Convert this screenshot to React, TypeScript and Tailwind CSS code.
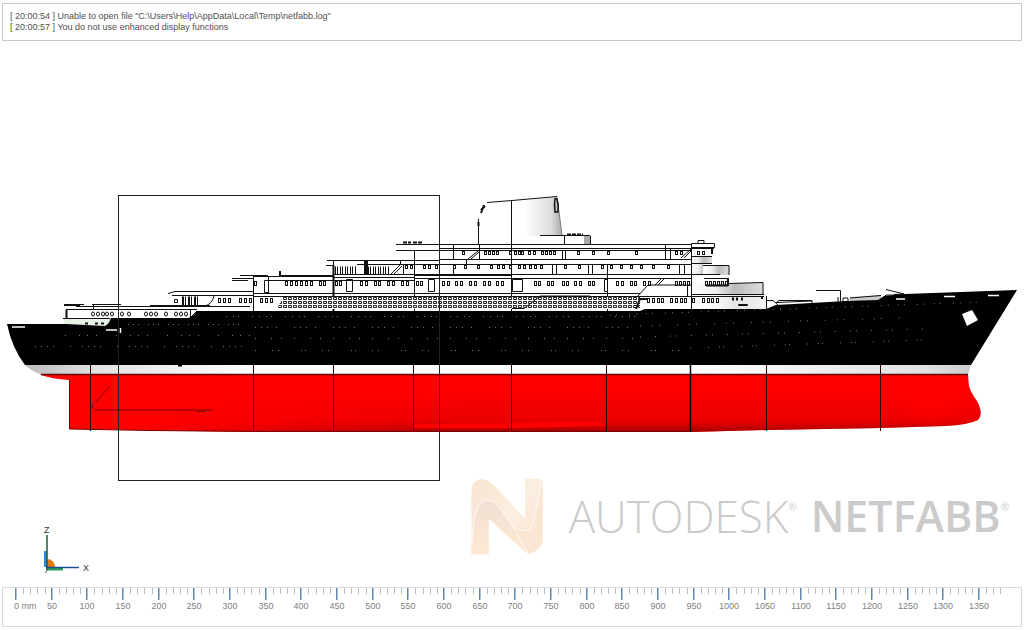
const LOG = [
  { time: '20:00:54', message: 'Unable to open file "C:\\Users\\Help\\AppData\\Local\\Temp\\netfabb.log"' },
  { time: '20:00:57', message: 'You do not use enhanced display functions' },
]

// x positions of the windows on each deck
const DECKS = [
  { y: 251, w: 2, h: 3, xs: [462, 484, 488, 492, 496, 509, 514, 518, 521, 528, 533, 541, 545, 549, 553, 577, 592, 607, 635, 675, 680, 697, 702] },
  { y: 265, w: 2, h: 3, xs: [405, 410, 423, 428, 435, 453, 464, 477, 490, 497, 502, 509, 518, 523, 529, 534, 540, 564, 578, 601, 610, 620, 630, 640, 652, 667] },
  { y: 281, w: 2, h: 4, xs: [254, 285, 290, 295, 300, 305, 310, 319, 323, 335, 339, 360, 365, 374, 378, 387, 392, 401, 406, 416, 420, 442, 447, 455, 460, 469, 474, 483, 488, 496, 501, 534, 538, 547, 551, 562, 566, 574, 579, 588, 592, 616, 621, 630, 634, 643, 648, 675, 679, 683, 687, 705, 709, 713, 717, 721, 725] },
  { y: 298, w: 2, h: 4, xs: [218, 223, 228, 239, 244, 249, 260, 265, 270, 647, 652, 657, 661, 670, 675, 680, 684, 692, 702, 707, 711, 716] },
]

const AFT_PORTS = [93, 98, 103, 107, 112, 122, 129, 146, 151, 156, 166, 176, 181, 186]
const FRAMES = [91, 254, 334, 414, 512, 607, 767, 881]

const HULL_DOTS = [
  { d: 'M128 324.5H245', dash: '1 4 1 4 1 9' },
  { d: 'M65 335.5H250', dash: '1 13 1 7 1 8 1 19' },
  { d: 'M35 346.5H250', dash: '1 5 1 5 1 5 1 16 1 11' },
  { d: 'M226 316.5H640', dash: '1 6 1 4 1 13 1 6' },
  { d: 'M255 327.5H640', dash: '1 5 1 5 1 8 1 17' },
  { d: 'M255 338.5H640', dash: '1 15 1 9 1 12' },
  { d: 'M255 350.5H690', dash: '1 16 1 5 1 22 1 3' },
  { d: 'M610 315L985 302', dash: '1 5 1 12 1 6 1 9' },
  { d: 'M640 326L900 318', dash: '1 11 1 6 1 17' },
  { d: 'M640 337L925 329', dash: '1 14 1 14 1 5' },
  { d: 'M690 348L925 340', dash: '1 17 1 10 1 3' },
]

const LABELS = Array.from({ length: 28 }, (_, i) => i * 50)
const TICKS = Array.from({ length: 139 }, (_, i) => i)
const rulerX = (mm: number) => Math.round(16 + mm * 0.7133)

function LogPanel() {
  return (
    <ul className="border border-[#c8c8c8] px-[7px] py-[7px] text-[9px] leading-[11px] text-[#505050]">
      {LOG.map(entry => (
        <li key={entry.time}>[ {entry.time} ] {entry.message}</li>
      ))}
    </ul>
  )
}

function Superstructure() {
  return (
    <g fill="none" stroke="#111">
      {/* Shaded deck houses */}
      <g stroke="none">
        <path d="M691 256H712V264H703V275H691Z" fill="url(#house)" />
        <path d="M703 266H729V275H703Z" fill="url(#house)" />
        <path d="M691 283H763V294H691Z" fill="url(#house)" />
        <path d="M691 294H766V309H691Z" fill="url(#house)" opacity="0.4" />
        <path d="M64 319H111L106 326H64Z" fill="#e6f3e6" />
        <path d="M487 202L557 197L562 236H487Z" fill="url(#funnel)" />
        <path d="M584 236H590V244H584Z" fill="#aaa" />
      </g>

      {/* Funnel */}
      <path d="M487 202.5L512 200.5L557 196.5M478.5 219V244M540 235.5H590M511.5 201V311M564.5 236V244M590.5 236V244" />
      <path d="M557 197L562 235" stroke="#777" />
      <path d="M555 199h2q2 6 1 13h-3q-1-7 0-13Z" strokeWidth="1.5" />
      <path d="M484 205l-3 8M485 206l-4 4M478.5 222v4" strokeWidth="2" />
      <path d="M567 234.5H583" strokeWidth="2" strokeDasharray="4 1" />

      {/* Deck lines */}
      <path d="M396 244.5H691M440 248.5H714M396 250.5H691M440 259.5H691M327 260.5H440M326 265.5H333M357 264.5H691M333 274.5H720M415 278.5H691" />
      <path d="M333 277.5H415M268 280.5H415M253 293.5H640M253 296.5H690M638 296.5H764" />
      <path d="M232 278.5H254M232 280.5H248M240 275.5H268M253 276.5H333M168 293.5L175 291.5H253M172 295.5H253" />
      <path d="M64 304.5H84M92 304.5H121M76 306.5H250M66 309.5H197M63 318.5H110M150 305.5H210" />
      <path d="M280 276H333M64 305H80M415 275H512" strokeWidth="2" />
      <path d="M413 242.5h10M403 242.5h8" strokeWidth="2" strokeDasharray="4 1" />

      {/* Bulkheads */}
      <path d="M253.5 276V311M268.5 276V293M333.5 260V311M414.5 250V311M453.5 245V260M453.5 265V275M479.5 244V260M562.5 250V260M565.5 250V260M552.5 265V275M556.5 265V275M588.5 265V275M592.5 265V275M607.5 265V311" />
      <path d="M665.5 244V259M670.5 249V259M679.5 264V275M684.5 264V275M691.5 244V309M687.5 285V296M466.5 260V265M400.5 260V265M403.5 265V275M190.5 310V318M93.5 304V310" />
      <path d="M264.5 280.5h4v12h-4zM346.5 279.5h6v12h-6zM428.5 279.5h6v12h-6zM512.5 279.5h10v12h-10zM604.5 279.5h3v12h-3z" />
      <path d="M333.5 265V311M66.5 310V318" strokeWidth="2" />
      <path d="M366 260V275" strokeWidth="4" />
      <path d="M280 271V276" strokeWidth="2" />
      <path d="M390 275L400 265M393 275L402 266M468 259L478 251M471 259L479 252M681 258L691 249M684 258L691 251M655 285L662 278M658 285L665 278M638 296L648 285H691M214 296Q212 304 205 306M197 311L190 318" />
      <path d="M335 270.5H356M368 270.5H390" strokeWidth="8" strokeDasharray="1 1 1 2" />
      <path d="M182 301H200" strokeWidth="9" strokeDasharray="2 1 1 2" />
      <path d="M174.5 299.5h3v3h-3z" />

      {/* Bridge */}
      <path d="M691.5 243.5H714.5V247.5H691.5ZM698 243V240.5H704V243M691 256.5H712M703 265.5H729V275M691 263.5H712M728 283.5L763 282.5V294M766.5 296V309M691 294.5H764M704 278.5H729" />
      <path d="M712 248v6M728 278v8M706 285.5H728M762 296v3" strokeWidth="2" />
      <path d="M732 299H745" strokeWidth="3" strokeDasharray="2 2 2 3" />
      <path d="M738.5 304.5h9v1h-9z" />

      {/* Promenade glazing */}
      <path d="M283 297H640V309H277Z" fill="url(#glazing)" stroke="none" />
      <path d="M512 308.5H524L540 296H590" />
      <path d="M636 309L640 299H647" strokeWidth="2" />

      {DECKS.map(deck =>
        deck.xs.map(x => (
          <rect key={`${deck.y}-${x}`} x={x + 0.5} y={deck.y + 0.5} width={deck.w} height={deck.h} />
        ))
      )}
      {AFT_PORTS.map(x => (
        <ellipse key={x} cx={x} cy="314" rx="1.5" ry="2" />
      ))}
      <path d="M85 323.5h3M95 323.5h3M101 323.5h3" strokeWidth="2" />

      {/* Foredeck gear */}
      <path d="M850 297L881 295V301H850Z" fill="#ccc" stroke="none" />
      <path d="M766 300.5H773L778 305M776 303L779 300.5H812V303M776 302.5L812 301M816 290.5H840.5V302M838 297V302M843 302V298H848V302M850 298L881 295.5M881 300L886 295H905M886 289.5L904 294L894 294.5" />
    </g>
  )
}

function ShipModel() {
  return (
    <svg viewBox="2 41 1020 437" className="block h-auto w-full overflow-visible" role="img" aria-label="Ship hull, side view">
      <defs>
        <linearGradient id="funnel">
          <stop offset="0.5" stopColor="#fff" />
          <stop offset="0.85" stopColor="#ddd" />
          <stop offset="1" stopColor="#aaa" />
        </linearGradient>
        <linearGradient id="house">
          <stop offset="0" stopColor="#fff" />
          <stop offset="0.35" stopColor="#eee" />
          <stop offset="0.6" stopColor="#bbb" />
          <stop offset="1" stopColor="#ddd" />
        </linearGradient>
        <linearGradient id="boot">
          <stop offset="0" stopColor="#bbb" />
          <stop offset="0.08" stopColor="#e4e4e4" />
          <stop offset="0.25" stopColor="#fff" />
          <stop offset="0.7" stopColor="#fff" />
          <stop offset="0.95" stopColor="#e2e2e2" />
          <stop offset="1" stopColor="#ccc" />
        </linearGradient>
        <linearGradient id="keel" x1="0" y1="0" x2="0" y2="1">
          <stop offset="0.3" stopColor="#900" stopOpacity="0" />
          <stop offset="0.8" stopColor="#b00" stopOpacity="0.3" />
          <stop offset="1" stopColor="#800" stopOpacity="0.8" />
        </linearGradient>
        <linearGradient id="fade">
          <stop offset="0.1" stopColor="#000" />
          <stop offset="0.45" stopColor="#fff" />
          <stop offset="1" stopColor="#fff" />
        </linearGradient>
        <radialGradient id="bulb">
          <stop offset="0" stopColor="#f00" />
          <stop offset="1" stopColor="#f00" stopOpacity="0" />
        </radialGradient>
        <mask id="midships">
          <rect x="40" y="370" width="950" height="70" fill="url(#fade)" />
        </mask>
        <pattern id="glazing" x="283" y="297" width="5" height="4" patternUnits="userSpaceOnUse">
          <rect width="5" height="4" fill="#fff" />
          <path d="M0.5 0.5h3v2h-3z" fill="none" stroke="#222" />
        </pattern>
      </defs>

      <Superstructure />

      {/* Hull */}
      <path d="M7 324H66L105 326Q109 324 111 318H188Q193 317 197 311H640L645 309H766L776 305L846 301L878 300L884 296L905 294L1017 290L971 365H25Q12 348 7 324Z" fill="#000" />
      {HULL_DOTS.map(row => (
        <path key={row.d} d={row.d} stroke="#777" strokeDasharray={row.dash} fill="none" />
      ))}
      <path d="M12 327H25M106 330H117M120.5 328V333M896 299H905M944 296.5H955M988 295.5H999" stroke="#fff" strokeWidth="1.5" />
      <path d="M962 314L972 310L978 320L967 326Z" fill="#fff" />

      {/* Boot top and underwater body */}
      <path d="M25 365H971L968 375H42Q33 372 25 365Z" fill="url(#boot)" />
      <path d="M41 375H968L969 386Q971 393 977 401Q984 414 978 420Q968 425 945 426L881 428L767 430L690 432H260L69 429V380Q52 379 41 375Z" fill="#f00" />
      <path d="M41 375H968L969 386Q971 393 977 401Q984 414 978 420Q968 425 945 426L881 428L767 430L690 432H260L69 429V380Q52 379 41 375Z" fill="url(#keel)" mask="url(#midships)" />
      <ellipse cx="930" cy="402" rx="46" ry="24" fill="url(#bulb)" />
      <path d="M413 424L600 422L606 423L604 426L512 428H415Z" fill="#f00" />
      <path d="M41 374.5H968" stroke="#600" strokeWidth="1.5" />
      <path d="M69.5 380V429L150 430.5L260 431.5H690" fill="none" stroke="#700" />
      {FRAMES.map(x => (
        <path key={x} d={`M${x - 0.5} 365V431`} stroke="#300" />
      ))}
      <path d="M690.5 365V432" stroke="#000" strokeWidth="1.5" />
      <path d="M109 387L96 402M92.5 404V409M94 410H212M197 411.5H206" fill="none" stroke="#700" />
      <path d="M178 365.5H182" stroke="#000" strokeWidth="2" />

      {/* Build platform */}
      <rect x="118.5" y="195.5" width="321" height="285" fill="none" stroke="#222" />
    </svg>
  )
}

function AxisTripod() {
  return (
    <svg viewBox="42 524 50 52" className="mt-[46px] ml-10 h-[52px] w-[50px] shrink-0" aria-label="Axes">
      <path d="M44 551H47V567H44Z" fill="#2b8be6" />
      <path d="M47 568H63V570.5H47Z" fill="#2a9d5c" />
      <path d="M47 567V559A8 8 0 0 1 55 567Z" fill="#e07b10" />
      <path d="M47 535V570" stroke="#1f5c3a" strokeWidth="1.5" />
      <path d="M46 567.5H79" stroke="#1c4f94" strokeWidth="1.5" />
      <path d="M47 570L45.5 573" stroke="#555" />
      <text x="44" y="533" fontSize="9" fill="#333">Z</text>
      <text x="83" y="571" fontSize="9" fill="#333">X</text>
    </svg>
  )
}

function Watermark() {
  return (
    <div className="mr-[13px] flex items-start text-[#cbcbcb]">
      <svg viewBox="60 38 216 230" className="h-[77px] w-[72px] shrink-0" aria-hidden="true">
        <defs>
          <linearGradient id="ribbon" x1="0" y1="0" x2="1" y2="1">
            <stop offset="0" stopColor="#f8e4d0" />
            <stop offset="0.5" stopColor="#fbeee0" />
            <stop offset="1" stopColor="#fae3cd" />
          </linearGradient>
          <linearGradient id="leg" x1="0" y1="0" x2="0" y2="1">
            <stop offset="0" stopColor="#f0dfd3" />
            <stop offset="1" stopColor="#fee9d3" />
          </linearGradient>
        </defs>
        <path d="M61 266V85Q61 42 92 41Q112 41 132 62L222 160V40H266Q275 40 275 50V228Q274 248 232 266L180 222L113 160V266Z" fill="url(#ribbon)" />
        <path d="M61 266Q66 104 106 104C142 104 160 152 184 182L232 266L113 160V266Z" fill="url(#leg)" />
        <path d="M184 182L232 266Q272 252 275 228V50L246 178Q238 202 215 196Q196 188 184 182Z" fill="#fbe5d3" />
        <path d="M63 240Q68 104 106 104C148 104 162 170 200 191Q240 208 247 170L272 48M182 180L232 265" fill="none" stroke="#fffaf5" strokeWidth="3" />
      </svg>
      <p className="ml-[26px] flex items-start pt-[11px] font-['Open_Sans'] text-[44px] leading-[54px] font-light whitespace-nowrap">
        AUTODESK<sup className="top-0 pt-[12px] text-[10px] leading-[12px] font-normal">®</sup>
        <span className="ml-[14px] text-[43px] font-semibold">NETFABB</span>
        <sup className="top-0 pt-[12px] text-[10px] leading-[12px] font-normal">®</sup>
      </p>
    </div>
  )
}

function Ruler() {
  return (
    <div className="border border-[#d8d8d8]">
      <svg viewBox="3 588 1018 38" className="block h-auto w-full" aria-label="Ruler in millimetres">
        {TICKS.map(i => (
          <rect
            key={i}
            x={rulerX(i * 10) - (i % 5 === 0 ? 1 : 0)}
            y="588"
            width={i % 5 === 0 ? 1.5 : 1}
            height={i % 5 === 0 ? 12 : 6}
            fill={i % 5 === 0 ? '#6687ad' : '#b4bfcc'}
          />
        ))}
        {LABELS.map(mm => (
          <text key={mm} x={mm === 0 ? 14 : rulerX(mm)} y="609" textAnchor={mm === 0 ? 'start' : 'middle'} fontSize="9" fill="#808080">
            {mm === 0 ? '0 mm' : mm}
          </text>
        ))}
      </svg>
    </div>
  )
}

export default function App() {
  return (
    <main className="flex min-h-screen flex-col bg-white px-[2px] py-[3px] font-['Liberation_Sans',sans-serif]">
      <LogPanel />
      <section className="flex grow flex-col">
        <ShipModel />
        <div className="flex grow items-start justify-between">
          <AxisTripod />
          <Watermark />
        </div>
      </section>
      <Ruler />
    </main>
  )
}
